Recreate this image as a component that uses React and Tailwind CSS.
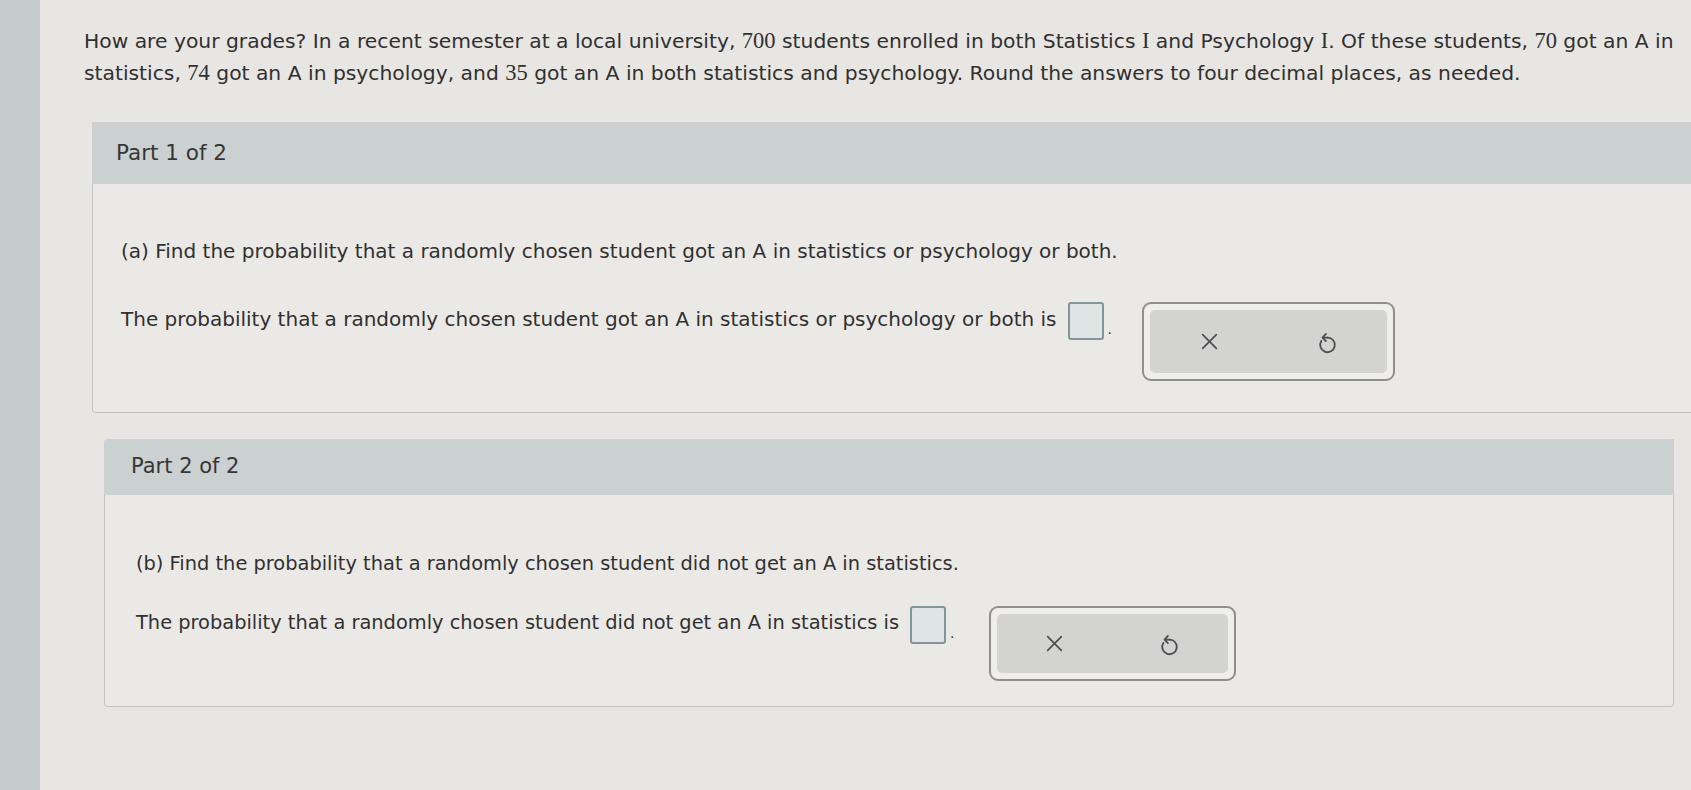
import React from "react";

const serif = "font-['Liberation_Serif',serif] text-[22.5px]";

function XIcon() {
  return (
    <svg width="21" height="21" viewBox="0 0 20 20" fill="none">
      <path d="M3.5 3.5 L16.5 16.5 M16.5 3.5 L3.5 16.5" stroke="#4b4d50" strokeWidth="1.6" strokeLinecap="round" />
    </svg>
  );
}

function UndoIcon() {
  return (
    <svg width="27" height="27" viewBox="0 0 24 24" fill="none">
      <path d="M12 8.5 A6.5 6.5 0 1 1 6.6 11.4" stroke="#4b4d50" strokeWidth="1.6" strokeLinecap="round" fill="none" />
      <path d="M12 8.5 H8" stroke="#4b4d50" strokeWidth="1.6" strokeLinecap="round" />
      <path d="M10.6 5.2 L7.6 8.5 L10.6 11.6" stroke="#4b4d50" strokeWidth="1.6" strokeLinecap="round" strokeLinejoin="round" fill="none" />
    </svg>
  );
}

function ButtonGroup({ w, h }) {
  return (
    <div className={`${w} ${h} rounded-[9px] border-2 border-[#8f8f8f] bg-[#efeeec] p-[6px] shrink-0`}>
      <div className="flex h-full w-full rounded-[5px] bg-[#d3d3d1]">
        <div className="flex flex-1 items-center justify-center">
          <XIcon />
        </div>
        <div className="flex flex-1 items-center justify-center">
          <UndoIcon />
        </div>
      </div>
    </div>
  );
}

function AnswerBox() {
  return (
    <span className="ml-[11px] inline-block h-[38px] w-[36px] shrink-0 rounded-[3px] border-2 border-[#7f979b] bg-[#dfe5e5]" />
  );
}

export default function App() {
  return (
    <div className="flex h-[790px] w-[1691px] overflow-hidden bg-[#e8e6e2] font-['DejaVu_Sans',sans-serif] text-[#303030]">
      <div className="w-[40px] shrink-0 bg-[#c6cccd]" />
      <div className="flex min-w-0 flex-1 flex-col pl-[44px]">
        <div className="pt-[25px] text-[20.3px] leading-[32px] whitespace-nowrap">
          <div>
            How are your grades? In a recent semester at a local university, <span className={serif}>700</span> students enrolled in both Statistics <span className={serif}>I</span> and Psychology <span className={serif}>I</span>. Of these students, <span className={serif}>70</span> got an A in
          </div>
          <div>
            statistics, <span className={serif}>74</span> got an A in psychology, and <span className={serif}>35</span> got an A in both statistics and psychology. Round the answers to four decimal places, as needed.
          </div>
        </div>

        {/* Part 1 */}
        <div className="ml-[8px] mt-[33px] flex flex-col">
          <div className="flex h-[62px] items-center bg-[#cbd0d1] pl-[24px] text-[21.5px] text-[#363636]">Part 1 of 2</div>
          <div className="h-[229px] rounded-bl-[4px] border-b border-l border-[#c3c3c1] bg-[#ebe9e5] pl-[28px] pt-[51px] text-[20px]">
            <div className="leading-[32px] whitespace-nowrap">(a) Find the probability that a randomly chosen student got an A in statistics or psychology or both.</div>
            <div className="mt-[35px] flex items-start">
              <div className="flex h-[38px] items-center whitespace-nowrap">
                <span className="-mt-[4px]">The probability that a randomly chosen student got an A in statistics or psychology or both is</span>
                <AnswerBox />
                <span className="ml-[4px] self-end pb-[4px] text-[14px] leading-none">.</span>
              </div>
              <div className="ml-[30px]">
                <ButtonGroup w="w-[253px]" h="h-[79px]" />
              </div>
            </div>
          </div>
        </div>

        {/* Part 2 */}
        <div className="ml-[20px] mr-[17px] mt-[26px] flex flex-col">
          <div className="flex h-[56px] items-center rounded-tl-[4px] bg-[#cbd0d1] pl-[27px] text-[21px] text-[#363636]">Part 2 of 2</div>
          <div className="h-[212px] rounded-b-[4px] border-x border-b border-[#c3c3c1] bg-[#ebe9e5] pl-[31px] pt-[53px] text-[19.4px]">
            <div className="leading-[32px] whitespace-nowrap">(b) Find the probability that a randomly chosen student did not get an A in statistics.</div>
            <div className="mt-[26px] flex items-start">
              <div className="flex h-[38px] items-center whitespace-nowrap">
                <span className="-mt-[4px]">The probability that a randomly chosen student did not get an A in statistics is</span>
                <AnswerBox />
                <span className="ml-[4px] self-end pb-[4px] text-[14px] leading-none">.</span>
              </div>
              <div className="ml-[34px]">
                <ButtonGroup w="w-[247px]" h="h-[75px]" />
              </div>
            </div>
          </div>
        </div>
      </div>
    </div>
  );
}
